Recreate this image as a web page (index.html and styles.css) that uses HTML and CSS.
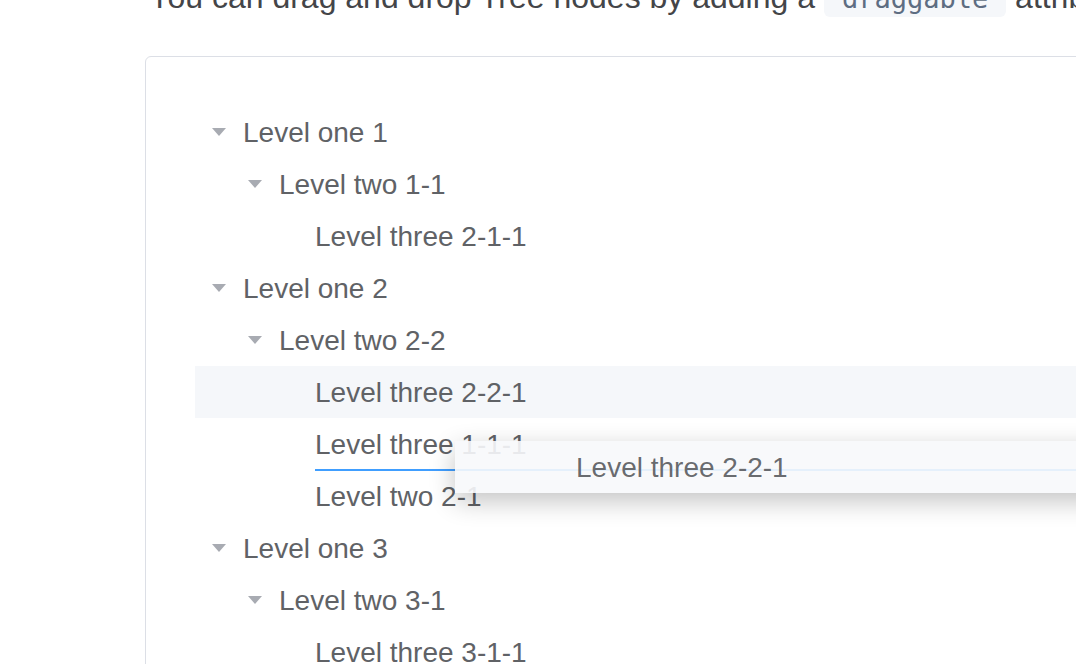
FILE: index.html
```html
<!DOCTYPE html>
<html>
<head>
<meta charset="utf-8">
<link rel="stylesheet" href="styles.css">
</head>
<body>
<div class="page">
  <p class="intro">You can drag and drop Tree nodes by adding a <code>draggable</code> attribute.</p>
  <div class="demo">
    <div class="tree">
      <div class="row"><span class="caret"></span><span class="label">Level one 1</span></div>
      <div class="row lv2"><span class="caret"></span><span class="label">Level two 1-1</span></div>
      <div class="row lv3"><span class="caret leaf"></span><span class="label">Level three 2-1-1</span></div>
      <div class="row"><span class="caret"></span><span class="label">Level one 2</span></div>
      <div class="row lv2"><span class="caret"></span><span class="label">Level two 2-2</span></div>
      <div class="row lv3 current"><span class="caret leaf"></span><span class="label">Level three 2-2-1</span></div>
      <div class="row lv3"><span class="caret leaf"></span><span class="label">Level three 1-1-1</span></div>
      <div class="row lv3"><span class="caret leaf"></span><span class="label">Level two 2-1</span></div>
      <div class="row"><span class="caret"></span><span class="label">Level one 3</span></div>
      <div class="row lv2"><span class="caret"></span><span class="label">Level two 3-1</span></div>
      <div class="row lv3"><span class="caret leaf"></span><span class="label">Level three 3-1-1</span></div>
      <div class="drop-line"></div>
      <div class="ghost"><span class="label">Level three 2-2-1</span></div>
    </div>
  </div>
</div>
</body>
</html>
```
FILE: styles.css
```css
html, body {
  margin: 0;
  padding: 0;
  background: #ffffff;
}
body {
  width: 1076px;
  height: 664px;
  overflow: hidden;
  font-family: "Liberation Sans", Arial, sans-serif;
}
.page {
  padding-left: 145px;
}
.intro {
  margin: -27px 0 0 4px;
  height: 48px;
  font-size: 32px;
  line-height: 48px;
  color: #444548;
  white-space: nowrap;
}
.intro code {
  font-family: "DejaVu Sans Mono", monospace;
  font-size: 27px;
  line-height: 1;
  color: #5e6d82;
  background: #f5f7fa;
  border-radius: 6px;
  padding: 3px 18px;
}
.demo {
  margin-top: 35px;
  width: 1200px;
  height: 700px;
  border: 1px solid #dcdfe6;
  border-radius: 6px;
  padding: 49px 0 0 49px;
  box-sizing: border-box;
}
.tree {
  position: relative;
  font-size: 28px;
  color: #606266;
}
.row {
  display: flex;
  align-items: center;
  height: 52px;
}
.row.lv2 { padding-left: 36px; }
.row.lv3 { padding-left: 72px; }
.row.current { background: #f5f7fa; }
.caret {
  width: 24px;
  height: 24px;
  margin: 0 12px;
  display: flex;
  align-items: center;
  justify-content: center;
}
.caret::before {
  content: "";
  display: block;
  width: 0;
  height: 0;
  border-left: 7px solid transparent;
  border-right: 7px solid transparent;
  border-top: 8px solid #a8abb2;
}
.caret.leaf::before {
  border-top-color: transparent;
}
.label {
  white-space: nowrap;
  padding-top: 2px;
}
.drop-line {
  position: absolute;
  left: 120px;
  right: 0;
  top: 363px;
  height: 2px;
  background: #409eff;
}
.ghost {
  position: absolute;
  left: 260px;
  top: 335px;
  width: 900px;
  height: 52px;
  display: flex;
  align-items: center;
  padding-left: 121px;
  box-sizing: border-box;
  background: rgba(247, 248, 251, 0.9);
  color: rgba(96, 98, 102, 0.95);
  box-shadow: 0 8px 26px rgba(0, 0, 0, 0.24);
}
```
